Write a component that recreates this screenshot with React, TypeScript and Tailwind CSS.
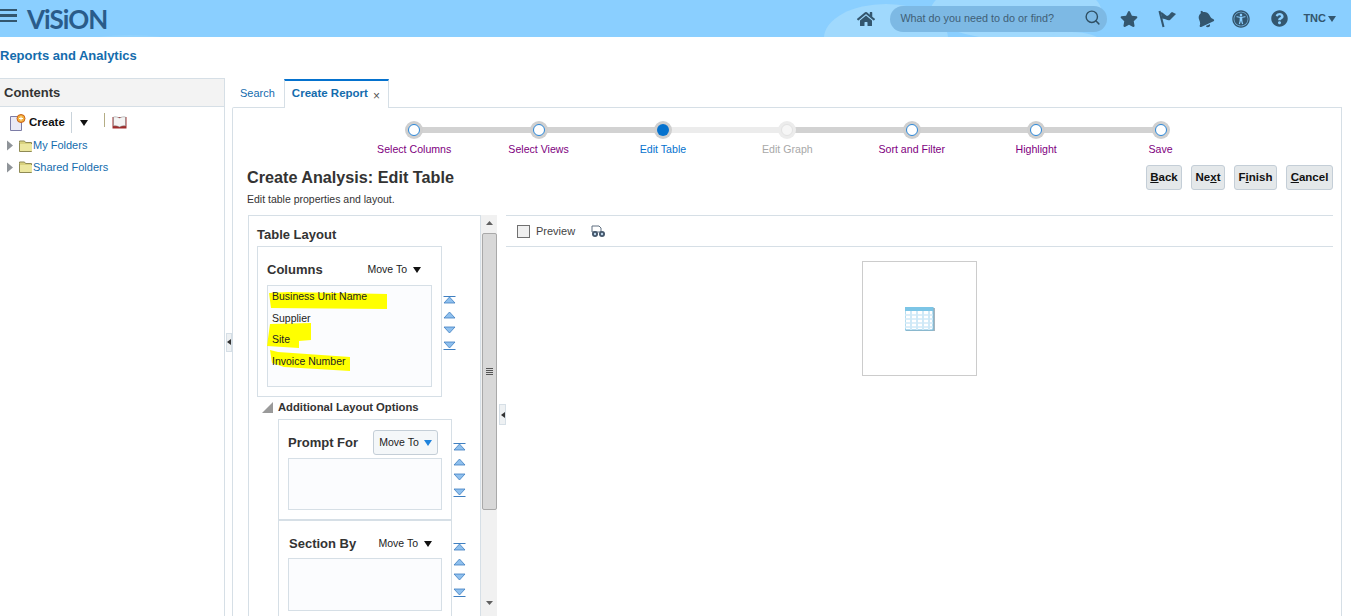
import React from 'react';
import { FaHome, FaStar, FaBell, FaUniversalAccess, FaQuestionCircle } from 'react-icons/fa';
import { Search } from 'lucide-react';

const STEPS = [
  { label: 'Select Columns', state: 'done' },
  { label: 'Select Views', state: 'done' },
  { label: 'Edit Table', state: 'current' },
  { label: 'Edit Graph', state: 'off' },
  { label: 'Sort and Filter', state: 'done' },
  { label: 'Highlight', state: 'done' },
  { label: 'Save', state: 'done' },
];

const Caret = ({ color = '#111' }: { color?: string }) => (
  <svg width="8" height="6" viewBox="0 0 8 6" className="shrink-0">
    <path d="M0 0h8L4 6z" fill={color} />
  </svg>
);

const Expand = () => (
  <svg width="8" height="11" viewBox="0 0 8 11" className="shrink-0">
    <path d="M1 0.5 7 5.5 1 10.5z" fill="#8f9499" />
  </svg>
);

const Folder = () => (
  <svg width="14" height="12" viewBox="0 0 14 12" className="shrink-0">
    <path d="M0.5 2.5V1h5l1 1.5h6v9h-12z" fill="#d9d27e" stroke="#8f8a55" />
    <path d="M1 4h12v7H1z" fill="#ece79f" />
  </svg>
);

const MoveIcon = ({ dir, bar }: { dir: 'up' | 'down'; bar?: boolean }) => {
  const tri = dir === 'up' ? 'M6.5 1 12 7H1z' : 'M1 1h11L6.5 7z';
  return (
    <svg width="13" height="9" viewBox="0 0 13 9" className="block">
      <path d={tri} fill="#8fc0ee" stroke="#3f7fc0" strokeWidth="0.8" />
      {bar && <path d={dir === 'up' ? 'M0.5 0.5h12' : 'M0.5 8.5h12'} stroke="#3f7fc0" />}
    </svg>
  );
};

const Reorder = ({ className }: { className: string }) => (
  <div className={`flex flex-col gap-[6px] ${className}`}>
    <MoveIcon dir="up" bar />
    <MoveIcon dir="up" />
    <MoveIcon dir="down" />
    <MoveIcon dir="down" bar />
  </div>
);

const Step = ({ label, state, index }: { label: string; state: string; index: number }) => {
  const text =
    state === 'current' ? 'text-[#0572ce]' : state === 'off' ? 'text-[#a8a8a8]' : 'text-[#800080]';
  return (
    <div className="relative flex w-[124.4px] flex-col items-center">
      {index < STEPS.length - 1 && (
        <div
          className={`absolute left-[62px] top-[6px] h-[6px] w-[124.4px] ${
            state === 'current' ? 'bg-[#ececec]' : 'bg-[#d2d2d2]'
          }`}
        />
      )}
      <div
        className={`relative flex h-[18px] w-[18px] items-center justify-center rounded-full ${
          state === 'off' ? 'bg-[#ececec]' : 'bg-[#cfcfcf]'
        }`}
      >
        <div
          className={`h-[12px] w-[12px] rounded-full ${
            state === 'current'
              ? 'bg-[#0572ce]'
              : state === 'off'
                ? 'border border-[#e2e2e2] bg-[#f6f6f6]'
                : 'border border-[#2b87d8] bg-white'
          }`}
        />
      </div>
      <span className={`mt-[4px] whitespace-nowrap text-[10.6px] leading-[13px] ${text}`}>{label}</span>
    </div>
  );
};

const WizardButton = ({
  before,
  u,
  after,
  className,
}: {
  before: string;
  u: string;
  after: string;
  className: string;
}) => (
  <button
    className={`h-[25px] rounded-[3px] border border-[#c4ced7] bg-[#e4e8ea] text-[11.5px] font-bold text-[#111] ${className}`}
  >
    {before}
    <span className="underline">{u}</span>
    {after}
  </button>
);

const App = () => {
  return (
    <div className="flex h-[616px] w-[1351px] flex-col overflow-hidden bg-white font-['Liberation_Sans',Arial,sans-serif] text-[#333]">
      {/* Top bar */}
      <header className="relative flex h-[37px] shrink-0 items-center overflow-hidden bg-[#8acfff] text-[#33566e]">
        <svg className="absolute inset-0" width="1351" height="37">
          <ellipse cx="886" cy="38" rx="62" ry="34" fill="#a0d9fd" />
          <ellipse cx="1016" cy="10" rx="85" ry="30" fill="#a0d9fd" />
          <ellipse cx="1071" cy="42" rx="30" ry="10" fill="#a0d9fd" />
          <ellipse cx="130" cy="44" rx="50" ry="9" fill="#93d3fe" />
        </svg>
        <div className="relative flex w-full items-center pr-[15px]">
          <div className="mb-[6px] flex w-[17px] flex-col gap-[3px]">
            <div className="h-[2.5px] bg-[#33566e]" />
            <div className="h-[2.5px] bg-[#33566e]" />
            <div className="h-[2.5px] bg-[#33566e]" />
          </div>
          <span className="ml-[10px] font-['Lato',sans-serif] text-[26px] font-bold leading-[32px] tracking-[-1px] text-[#2a5c8a]">
            ViSiON
          </span>
          <FaHome className="ml-auto shrink-0" size={18} />
          <div className="ml-[15px] flex h-[26px] w-[217px] items-center rounded-full bg-[#7db9e4] pl-[10px] pr-[6px]">
            <span className="flex-1 text-[10.8px] text-[#3f6076]">What do you need to do or find?</span>
            <Search size={17} strokeWidth={2} className="mb-[3px] text-[#2f4f63]" />
          </div>
          <FaStar className="ml-[13px] shrink-0" size={18} />
          <svg width="18" height="18" viewBox="0 0 18 18" className="ml-[20px] shrink-0">
            <path d="M1.500 1 5.500 17" stroke="#33566e" strokeWidth="2" />
            <path d="M2.500 2C5 2 7 5 9 6c2 0 3-3 5-4l4 2c-2 2-4 4-6 6-3 1-5-2-7.500-1z" fill="#33566e" />
          </svg>
          <FaBell className="ml-[20px] shrink-0 -rotate-[25deg]" size={18} />
          <FaUniversalAccess className="ml-[18px] shrink-0" size={18} />
          <FaQuestionCircle className="ml-[21px] shrink-0" size={17} />
          <span className="ml-[15px] text-[11px] font-bold">TNC</span>
          <div className="ml-[2px]">
            <Caret color="#33566e" />
          </div>
        </div>
      </header>

      {/* Page title */}
      <div className="flex h-[41px] shrink-0 items-center pb-[4px] text-[13px] font-bold text-[#146cad]">
        Reports and Analytics
      </div>

      <div className="flex min-h-0 flex-1">
        {/* Contents */}
        <aside className="w-[225px] shrink-0 border-r border-t border-[#d6dfe6]">
          <div className="flex h-[28px] items-center border-b border-[#d6dfe6] bg-[#f3f3f3] pl-[4px] text-[13px] font-bold text-[#333]">
            Contents
          </div>
          <div className="flex items-center pb-[1px] pl-[10px] pt-[5px]">
            <svg width="16" height="17" viewBox="0 0 16 17" className="shrink-0">
              <path d="M0.500 2.500h11v14h-11z" fill="#e9e9f6" stroke="#7c7ca6" />
              <circle cx="11" cy="4.500" r="4" fill="#f3b33d" stroke="#c9601b" />
              <path d="M11 2.500v4M9 4.500h4" stroke="#fff" />
            </svg>
            <span className="ml-[3px] text-[11.500px] font-bold text-[#111]">Create</span>
            <div className="ml-[6px] h-[21px] w-px bg-[#c9d3db]" />
            <div className="ml-[8px]">
              <Caret />
            </div>
            <div className="mb-[6px] ml-[16px] h-[14px] w-px bg-[#b4ad85]" />
            <svg width="15" height="13" viewBox="0 0 15 13" className="ml-[7px] shrink-0">
              <path d="M0.500 1h14v11.500h-14z" fill="#a02c2c" />
              <path d="M1.500 1c2-.5 4 0 6 1 2-1 4-1.500 6-1v9c-2-.5-4 0-6 1-2-1-4-1.500-6-1z" fill="#f4f4f4" stroke="#888" strokeWidth="0.500" />
            </svg>
          </div>
          <div className="flex h-[22px] items-center pl-[6px] pt-[1px] text-[11px] text-[#146cad]">
            <Expand />
            <span className="ml-[5px]">
              <Folder />
            </span>
            My Folders
          </div>
          <div className="flex h-[22px] items-center pl-[6px] text-[11px] text-[#146cad]">
            <Expand />
            <span className="ml-[5px]">
              <Folder />
            </span>
            Shared Folders
          </div>
        </aside>

        {/* Splitter */}
        <div className="flex w-[7px] shrink-0 items-center justify-end pb-[10px]">
          <div className="flex h-[19px] w-[6px] items-center justify-center border border-[#d6dfe6] bg-[#eef1f3]">
            <svg width="4" height="6" viewBox="0 0 4 6">
              <path d="M4 0v6L0 3z" fill="#333" />
            </svg>
          </div>
        </div>

        {/* Main */}
        <main className="flex min-w-0 w-[1110px] flex-col pt-px">
          <div className="flex h-[28px] shrink-0 items-end pl-[8px] text-[11px] text-[#146cad]">
            <span className="mb-[6px]">Search</span>
            <div className="relative top-px ml-[9px] flex h-[29px] w-[105px] items-center border-x border-t-2 border-x-[#d6dfe6] border-t-[#0572ce] bg-white pb-[2px] pl-[7px] text-[11.5px] font-bold">
              Create Report
              <span className="ml-[5px] mt-[5px] text-[12px] font-normal leading-none text-[#555]">×</span>
            </div>
          </div>

          <section className="flex min-h-0 flex-1 flex-col rounded-tl-[2px] border-x border-t border-[#d6dfe6] pl-[14px] pr-[8px]">
            <div className="ml-[105px] flex h-[57px] shrink-0 pt-[13px]">
              {STEPS.map((s, i) => (
                <Step key={s.label} label={s.label} state={s.state} index={i} />
              ))}
            </div>

            <div className="flex h-[50px] shrink-0 justify-between">
              <div>
                <h1 className="mt-[3px] text-[16.2px] font-bold leading-[19px] text-[#333]">Create Analysis: Edit Table</h1>
                <p className="mt-[6px] text-[10.500px] leading-[13px] text-[#333]">Edit table properties and layout.</p>
              </div>
              <div className="flex gap-[9px]">
                <WizardButton before="" u="B" after="ack" className="w-[36px]" />
                <WizardButton before="Ne" u="x" after="t" className="w-[34px]" />
                <WizardButton before="F" u="i" after="nish" className="w-[43px]" />
                <WizardButton before="" u="C" after="ancel" className="w-[47px]" />
              </div>
            </div>

            <div className="flex min-h-0 flex-1">
              {/* Layout panel */}
              <div className="ml-px flex w-[233px] shrink-0 flex-col border-x border-t border-[#d6dfe6] pl-[8px] text-[#333]">
                <h2 className="mt-[11px] text-[13px] font-bold leading-[16px]">Table Layout</h2>
                <div className="flex items-start">
                  <div className="mt-[3px] h-[151px] w-[185px] shrink-0 border border-[#d6dfe6] px-[9px]">
                    <div className="flex h-[38px] items-center pt-[8px]">
                      <span className="flex-1 text-[13px] font-bold">Columns</span>
                      <span className="text-[10.500px] text-[#222]">Move To</span>
                      <span className="ml-[6px] mr-[11px]">
                        <Caret />
                      </span>
                    </div>
                    <div className="relative h-[102px] border border-[#d6dfe6] bg-[#fbfcfe] pl-[4px] text-[10.500px] text-[#222]">
                      <svg width="120" height="90" className="absolute left-0 top-0 overflow-visible">
                        <path
                          d="M1 7 20 6 119 8V23L3 22zM2 38 43 37V54L31 55V62L-1 60zM2 64 10 66 82 71V85L16 81 4 77z"
                          fill="#ffff00"
                        />
                      </svg>
                      <div className="relative flex flex-col gap-[8.700px] pt-[4px] leading-[13px]">
                        <span>Business Unit Name</span>
                        <span>Supplier</span>
                        <span>Site</span>
                        <span>Invoice Number</span>
                      </div>
                    </div>
                  </div>
                  <Reorder className="ml-[1px] mt-[53px]" />
                </div>

                <div className="flex h-[21px] shrink-0 items-center pl-[5px]">
                  <svg width="11" height="11" viewBox="0 0 11 11">
                    <path d="M11 0v11H0z" fill="#9a9a9a" />
                  </svg>
                  <span className="ml-[5px] text-[11.25px] font-bold">Additional Layout Options</span>
                </div>

                <div className="ml-[21px] mt-[1px] flex items-start">
                  <div className="h-[101px] w-[174px] shrink-0 border border-[#d6dfe6] px-[9px]">
                    <div className="flex h-[38px] items-center pt-[7px]">
                      <span className="flex-1 text-[13px] font-bold">Prompt For</span>
                      <div className="mr-[4px] flex h-[25px] w-[65px] items-center justify-center gap-[5px] rounded-[3px] border border-[#c4ced7] bg-[#f4f7f9] text-[10.500px] text-[#222]">
                        Move To
                        <Caret color="#1f83dc" />
                      </div>
                    </div>
                    <div className="h-[52px] border border-[#d6dfe6] bg-[#fbfcfe]" />
                  </div>
                  <Reorder className="ml-[1px] mt-[24px]" />
                </div>

                <div className="ml-[21px] flex items-start">
                  <div className="h-[110px] w-[174px] shrink-0 border border-[#d6dfe6] px-[9px]">
                    <div className="flex h-[37px] items-center pl-[1px] pt-[8px]">
                      <span className="flex-1 text-[13px] font-bold">Section By</span>
                      <span className="text-[10.500px] text-[#222]">Move To</span>
                      <span className="ml-[6px] mr-[10px]">
                        <Caret />
                      </span>
                    </div>
                    <div className="h-[53px] border border-[#d6dfe6] bg-[#fbfcfe]" />
                  </div>
                  <Reorder className="ml-[1px] mt-[23px]" />
                </div>
              </div>

              {/* Scrollbar */}
              <div className="flex w-[16px] shrink-0 flex-col items-center bg-[#f1f1f1]">
                <svg width="7" height="4" viewBox="0 0 7 4" className="mt-[6px]">
                  <path d="M3.500 0 7 4H0z" fill="#606060" />
                </svg>
                <div className="mt-[8px] flex h-[277px] w-[15px] items-center justify-center rounded-[2px] border border-[#a9a9a9] bg-[#d8d8d8]">
                  <div className="flex flex-col gap-px">
                    <div className="h-px w-[7px] bg-[#555]" />
                    <div className="h-px w-[7px] bg-[#555]" />
                    <div className="h-px w-[7px] bg-[#555]" />
                    <div className="h-px w-[7px] bg-[#555]" />
                  </div>
                </div>
                <svg width="7" height="4" viewBox="0 0 7 4" className="mt-[91px]">
                  <path d="M0 0h7L3.500 4z" fill="#606060" />
                </svg>
              </div>

              {/* Collapse handle */}
              <div className="ml-[2px] w-[7px] shrink-0 pt-[189px]">
                <div className="flex h-[21px] w-[7px] items-center justify-center border border-[#d6dfe6] bg-[#eef1f3]">
                  <svg width="4" height="6" viewBox="0 0 4 6">
                    <path d="M4 0v6L0 3z" fill="#333" />
                  </svg>
                </div>
              </div>

              {/* Preview */}
              <div className="flex min-w-0 flex-1 flex-col">
                <div className="flex h-[32px] shrink-0 items-center border-y border-[#d6dfe6] pl-[11px]">
                  <div className="h-[13px] w-[13px] border border-[#707070] bg-[#f0f0f0]" />
                  <span className="ml-[6px] mt-[1px] text-[11px] text-[#444]">Preview</span>
                  <svg width="15" height="13" viewBox="0 0 15 13" className="ml-[16px]">
                    <path d="M1 1h7l2 2v4H1z" fill="#fff" stroke="#5f6f80" />
                    <circle cx="4" cy="9" r="3" fill="#44566a" />
                    <circle cx="11" cy="9" r="3" fill="#44566a" />
                    <circle cx="4" cy="9" r="1.200" fill="#bcd4ea" />
                    <circle cx="11" cy="9" r="1.200" fill="#bcd4ea" />
                  </svg>
                </div>
                <div className="mt-[14px] flex justify-center">
                  <div className="flex h-[115px] w-[115px] items-center justify-center border border-[#cccccc]">
                    <svg width="30" height="24" viewBox="0 0 30 24">
                      <rect x="1" y="1" width="29" height="23" fill="#a8b4bd" />
                      <rect x="0" y="0" width="28" height="23" fill="#ffffff" stroke="#6cbbe0" />
                      <rect x="0" y="0" width="28" height="4" fill="#7cc5e6" />
                      <path d="M0 8h28M0 12h28M0 16h28M0 20h28" stroke="#cfe9f7" strokeWidth="1.500" />
                      <path d="M6 4v19M12 4v19M18 4v19M24 4v19" stroke="#cfe9f7" strokeWidth="2" />
                    </svg>
                  </div>
                </div>
              </div>
            </div>
          </section>
        </main>
      </div>
    </div>
  );
};

export default App;
